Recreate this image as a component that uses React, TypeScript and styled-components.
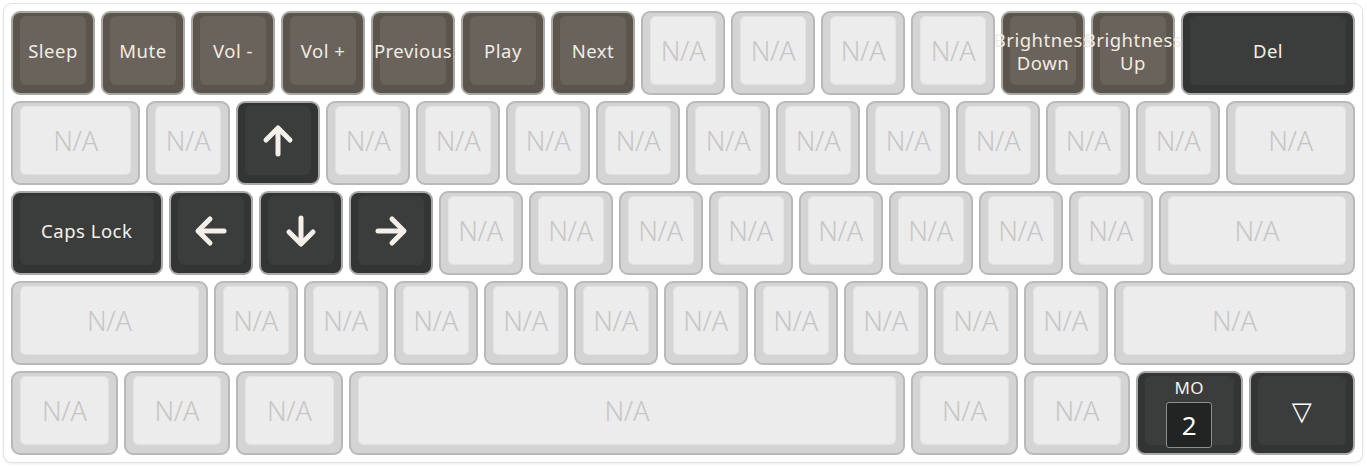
import React from "react";
import styled, { createGlobalStyle, css } from "styled-components";

const Global = createGlobalStyle`
  html, body { margin: 0; padding: 0; background: #ffffff; }
  body { font-family: "Noto Sans", "Open Sans", sans-serif; }
`;

type Variant = "brown" | "dark" | "blank";

const palette: Record<Variant, { outer: string; inner: string; edge: string; text: string }> = {
  brown: { outer: "#5b554e", inner: "#69635b", edge: "#a9a7a4", text: "#f1ece4" },
  dark: { outer: "#333534", inner: "#3b3d3c", edge: "#a9a9a9", text: "#f4f0e9" },
  blank: { outer: "#d4d4d4", inner: "#ececec", edge: "#b9b9b9", text: "#c9c9c9" },
};

const Board = styled.div`
  display: inline-flex;
  flex-direction: column;
  gap: 6px;
  margin: 3px;
  padding: 7px;
  background: #ffffff;
  border: 1px solid #e3e3e3;
  border-radius: 9px;
  box-shadow: 0 1px 3px rgba(0, 0, 0, 0.08);
`;

const Row = styled.div`
  display: flex;
  gap: 6px;
`;

const Key = styled.div<{ $u: number; $v: Variant }>`
  box-sizing: border-box;
  width: ${(p) => p.$u * 90 - 6}px;
  height: 84px;
  flex: none;
  display: flex;
  padding: 3px 7px 8px 7px;
  border-radius: 9px;
  border: 2px solid ${(p) => palette[p.$v].edge};
  background: ${(p) => palette[p.$v].outer};
  color: ${(p) => palette[p.$v].text};
`;

const KeyTop = styled.div<{ $v: Variant }>`
  flex: 1;
  min-width: 0;
  display: flex;
  flex-direction: column;
  align-items: center;
  justify-content: center;
  border-radius: 6px;
  background: ${(p) => palette[p.$v].inner};
  ${(p) =>
    p.$v === "blank" &&
    css`
      box-shadow: inset 0 0 0 1px #e2e2e2;
    `}
`;

const Label = styled.span`
  position: relative;
  z-index: 1;
  display: block;
  align-self: stretch;
  margin: 0 -40px;
  font-size: 18.5px;
  letter-spacing: 0.5px;
  line-height: 23px;
  white-space: nowrap;
  text-align: center;
`;

const NA = styled.span`
  font-size: 27px;
  font-weight: 300;
  letter-spacing: -0.3px;
  color: #c6c6c6;
`;

const MoTitle = styled.span`
  font-size: 17px;
  line-height: 16px;
  letter-spacing: 0.5px;
  margin-top: 6px;
  margin-bottom: 6px;
`;

const LayerBox = styled.div`
  box-sizing: border-box;
  width: 46px;
  height: 46px;
  flex: none;
  display: flex;
  align-items: center;
  justify-content: center;
  background: #222423;
  border: 1px solid #8e8e8e;
  border-radius: 3px;
  font-size: 26px;
  color: #ffffff;
`;

const Tri = styled.span`
  font-family: "DejaVu Sans", sans-serif;
  font-size: 26px;
  color: #ffffff;
`;

type Dir = "up" | "down" | "left" | "right";
const rot: Record<Dir, number> = { up: 0, right: 90, down: 180, left: 270 };

const Arrow = ({ dir }: { dir: Dir }) => (
  <svg width="36" height="36" viewBox="0 0 36 36" style={{ transform: `rotate(${rot[dir]}deg)` }}>
    <g fill="none" stroke="#f4f0e9" strokeWidth="5" strokeLinecap="round" strokeLinejoin="round">
      <path d="M18 31 V6" />
      <path d="M6 17 L18 5 L30 17" />
    </g>
  </svg>
);

type K =
  | { kind: "label"; u?: number; v: Variant; text: string[] }
  | { kind: "na"; u?: number }
  | { kind: "arrow"; u?: number; dir: Dir }
  | { kind: "mo"; u?: number }
  | { kind: "tri"; u?: number };

const L = (t: string | string[], v: Variant = "brown", u = 1): K => ({
  kind: "label",
  v,
  u,
  text: Array.isArray(t) ? t : [t],
});
const N = (u = 1): K => ({ kind: "na", u });
const A = (dir: Dir): K => ({ kind: "arrow", dir });
const Ns = (n: number): K[] => Array.from({ length: n }, () => N());

const rows: K[][] = [
  [
    L("Sleep"),
    L("Mute"),
    L("Vol -"),
    L("Vol +"),
    L("Previous"),
    L("Play"),
    L("Next"),
    ...Ns(4),
    L(["Brightness", "Down"]),
    L(["Brightness", "Up"]),
    L("Del", "dark", 2),
  ],
  [N(1.5), N(), A("up"), ...Ns(10), N(1.5)],
  [L("Caps Lock", "dark", 1.75), A("left"), A("down"), A("right"), ...Ns(8), N(2.25)],
  [N(2.25), ...Ns(10), N(2.75)],
  [N(1.25), N(1.25), N(1.25), N(6.25), N(1.25), N(1.25), { kind: "mo", u: 1.25 }, { kind: "tri", u: 1.25 }],
];

const variantOf = (k: K): Variant =>
  k.kind === "label" ? k.v : k.kind === "na" ? "blank" : "dark";

const KeyContent = ({ k }: { k: K }) => {
  switch (k.kind) {
    case "label":
      return (
        <>
          {k.text.map((t, i) => (
            <Label key={i}>{t}</Label>
          ))}
        </>
      );
    case "na":
      return <NA>N/A</NA>;
    case "arrow":
      return <Arrow dir={k.dir} />;
    case "mo":
      return (
        <>
          <MoTitle>MO</MoTitle>
          <LayerBox>2</LayerBox>
        </>
      );
    case "tri":
      return <Tri>▽</Tri>;
  }
};

export default function App() {
  return (
    <>
      <Global />
      <Board>
        {rows.map((row, ri) => (
          <Row key={ri}>
            {row.map((k, ki) => {
              const v = variantOf(k);
              return (
                <Key key={ki} $u={k.u ?? 1} $v={v}>
                  <KeyTop $v={v}>
                    <KeyContent k={k} />
                  </KeyTop>
                </Key>
              );
            })}
          </Row>
        ))}
      </Board>
    </>
  );
}
